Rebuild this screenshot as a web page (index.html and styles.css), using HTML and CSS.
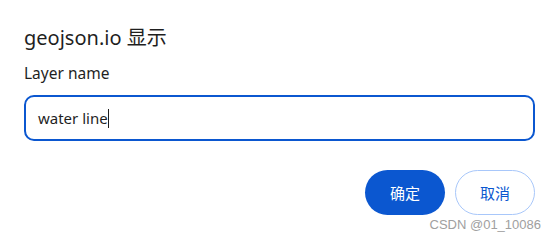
FILE: index.html
```html
<!DOCTYPE html>
<html lang="zh-CN">
<head>
    <meta charset="UTF-8">
    <title>geojson.io 显示</title>
    <link rel="stylesheet" href="styles.css">
</head>
<body>
    <div class="dialog">
        <h1 class="dialog-title">geojson.io 显示</h1>
        <label class="dialog-label" for="layer-name">Layer name</label>
        <div class="field">
            <span class="field-text">water line</span><span class="caret"></span>
        </div>
        <div class="actions">
            <button class="btn btn-primary">确定</button>
            <button class="btn btn-secondary">取消</button>
        </div>
        <div class="watermark">CSDN @01_10086</div>
    </div>
</body>
</html>
```

FILE: styles.css
```css
/* Chrome prompt dialog */
body {
    margin: 0;
    padding: 0;
    background-color: #fff;
    font-family: "Noto Sans", "Noto Sans CJK SC", sans-serif;
    color: #1f1f1f;
}

.dialog {
    width: 557px;
    height: 241px;
    box-sizing: border-box;
    padding: 25px 22px 0 24px;
    position: relative;
}

.dialog-title {
    margin: 0;
    font-size: 20px;
    font-weight: 400;
    line-height: 26px;
}

.dialog-label {
    display: block;
    margin-top: 12px;
    font-size: 15.5px;
    line-height: 20px;
}

.field {
    margin-top: 12px;
    height: 46px;
    box-sizing: border-box;
    border: 2px solid #0b57d0;
    border-radius: 10px;
    display: flex;
    align-items: center;
    padding-left: 12px;
    font-size: 15px;
}

.caret {
    display: inline-block;
    width: 1px;
    height: 19px;
    background-color: #1f1f1f;
}

.actions {
    display: flex;
    justify-content: flex-end;
    gap: 10px;
    margin-top: 29px;
}

.btn {
    width: 80px;
    height: 45px;
    border-radius: 23px;
    font-family: "Noto Sans CJK SC", sans-serif;
    font-size: 15px;
    cursor: pointer;
}

.btn-primary {
    background-color: #0b57d0;
    border: none;
    color: #fff;
}

.btn-secondary {
    background-color: #fff;
    border: 1px solid #a8c7fa;
    color: #0b57d0;
}

.watermark {
    position: absolute;
    right: 16px;
    bottom: 9px;
    font-family: "Liberation Sans", sans-serif;
    font-size: 13px;
    color: #a0a0a0;
}
```
